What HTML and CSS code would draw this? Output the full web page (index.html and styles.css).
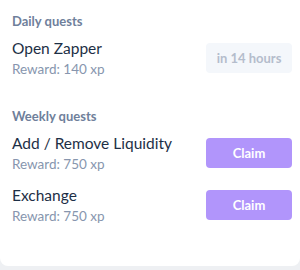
FILE: index.html
```html
<!DOCTYPE html>
<html>
<head>
<meta charset="utf-8">
<link rel="stylesheet" href="styles.css">
</head>
<body>
<div class="card">
  <section class="group">
    <h3 class="group-title">Daily quests</h3>
    <div class="quest">
      <div class="info">
        <div class="name">Open Zapper</div>
        <div class="reward">Reward: 140 xp</div>
      </div>
      <div class="badge">in 14 hours</div>
    </div>
  </section>
  <section class="group weekly">
    <h3 class="group-title">Weekly quests</h3>
    <div class="quest">
      <div class="info">
        <div class="name">Add / Remove Liquidity</div>
        <div class="reward">Reward: 750 xp</div>
      </div>
      <button class="claim">Claim</button>
    </div>
    <div class="quest">
      <div class="info">
        <div class="name">Exchange</div>
        <div class="reward">Reward: 750 xp</div>
      </div>
      <button class="claim">Claim</button>
    </div>
  </section>
</div>
</body>
</html>
```
FILE: styles.css
```css
html, body {
  margin: 0;
  padding: 0;
}
body {
  background: #eef0f3;
  font-family: Lato, "Noto Sans", sans-serif;
  width: 300px;
  height: 270px;
  overflow: hidden;
}
.card {
  background: #ffffff;
  height: 266px;
  box-sizing: border-box;
  border-radius: 0 0 8px 8px;
  padding: 13px 8px 0 12px;
}
.group-title {
  margin: 0;
  font-size: 13px;
  font-weight: 700;
  color: #6f7f9b;
  line-height: 16px;
}
.quest {
  display: flex;
  align-items: center;
  justify-content: space-between;
  margin-top: 9px;
}
.quest + .quest {
  margin-top: 12px;
}
.info {
  display: flex;
  flex-direction: column;
}
.name {
  font-size: 15.5px;
  color: #1d2f46;
  line-height: 20px;
}
.reward {
  font-size: 13.5px;
  color: #8796ae;
  line-height: 18px;
  margin-top: 2px;
}
.weekly {
  margin-top: 30px;
}
.badge, .claim {
  width: 86px;
  height: 30px;
  box-sizing: border-box;
  border-radius: 4px;
  display: flex;
  align-items: center;
  justify-content: center;
  font-family: Lato, "Noto Sans", sans-serif;
  font-size: 13px;
  font-weight: 700;
}
.badge {
  background: #f4f7fb;
  color: #b4bdcc;
}
.claim {
  background: #b195fb;
  color: #ffffff;
  border: none;
  padding: 0;
}
```
